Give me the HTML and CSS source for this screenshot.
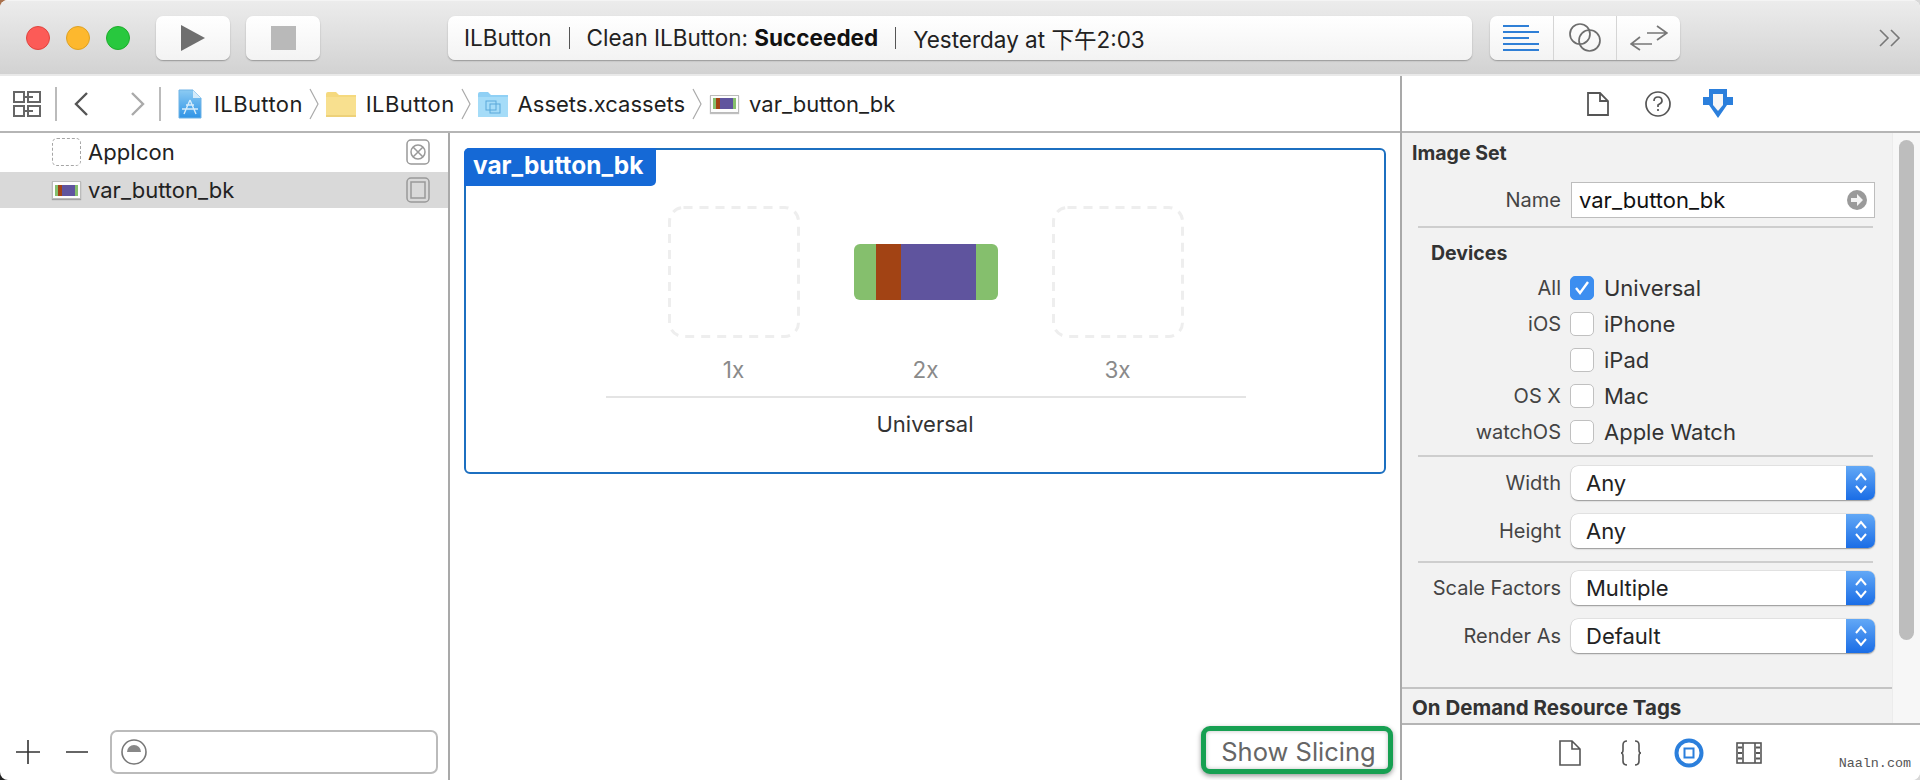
FILE: index.html
```html
<!DOCTYPE html>
<html lang="en">
<head>
<meta charset="utf-8">
<title>ILButton</title>
<link rel="stylesheet" href="styles.css">
</head>
<body>
<div class="window">
  <header class="toolbar">
    <div class="lights">
      <span class="light red"></span><span class="light yellow"></span><span class="light green"></span>
    </div>
    <button class="tool-btn play-btn"><svg width="24" height="26" viewBox="0 0 24 26"><path d="M0 0L24 13L0 26Z" fill="#6f6f6f"/></svg></button>
    <button class="tool-btn stop-btn"><span class="stop-square"></span></button>
    <div class="status">
      <span>ILButton</span><span class="status-sep"></span>
      <span>Clean ILButton: <b>Succeeded</b></span><span class="status-sep"></span>
      <span>Yesterday at 下午2:03</span>
    </div>
    <div class="segmented">
      <span class="seg"><svg width="36" height="26" viewBox="0 0 36 26" fill="none" stroke="#2f7fd6" stroke-width="2"><path d="M0 1H26M0 7H36M0 13H26M0 19H36M0 25H36"/></svg></span>
      <span class="seg seg-venn"><svg width="32" height="30" viewBox="0 0 32 30" fill="none" stroke="#6d6d6d" stroke-width="1.7"><circle cx="11" cy="11" r="10"/><circle cx="20.5" cy="17.5" r="10.5"/></svg></span>
      <span class="seg"><svg width="38" height="26" viewBox="0 0 38 26" fill="none" stroke="#777" stroke-width="1.7"><path d="M17 8H37M27 1L37 8L27 15M22 19H1M10 12L1 19L10 25"/></svg></span>
    </div>
    <svg class="more" width="22" height="18" viewBox="0 0 22 18" fill="none" stroke="#777" stroke-width="1.6"><path d="M1 1L9 9L1 17M12 1L20 9L12 17"/></svg>
  </header>
  <div class="workspace">
    <div class="editor">
      <nav class="jumpbar">
        <svg class="jb-grid" width="28" height="26" viewBox="0 0 28 26" fill="none" stroke="#666" stroke-width="2"><rect x="1" y="1" width="10" height="10"/><rect x="15" y="1" width="12" height="10"/><rect x="1" y="15" width="10" height="10"/><rect x="15" y="15" width="12" height="10"/><path d="M11 6H20M11 20H20"/></svg>
        <span class="jb-sep"></span>
        <svg class="jb-back" width="16" height="24" viewBox="0 0 16 24" fill="none" stroke="#555" stroke-width="2.4"><path d="M14 1L3 12L14 23"/></svg>
        <svg class="jb-fwd" width="16" height="24" viewBox="0 0 16 24" fill="none" stroke="#aaa" stroke-width="2.4"><path d="M2 1L13 12L2 23"/></svg>
        <span class="jb-sep"></span>
        <svg class="crumb-icon first" width="24" height="30" viewBox="0 0 24 30"><defs><linearGradient id="appdoc" x1="0" y1="0" x2="0" y2="1"><stop offset="0" stop-color="#8ccbf3"/><stop offset="1" stop-color="#2e93e6"/></linearGradient></defs><path d="M1 1H15L23 9V29H1Z" fill="url(#appdoc)" stroke="#6fb3e6"/><path d="M15 1V9H23Z" fill="#d4ebfa"/><path d="M12 11L6 25M12 11L18 25M4 20H20M8 16H16" stroke="#d6ecfb" stroke-width="1.4" fill="none"/></svg>
        <span class="crumb crumb-wide crumb-first">ILButton</span>
        <svg class="crumb-chev" width="10" height="32" viewBox="0 0 10 32" fill="none" stroke="#aaa" stroke-width="1.2"><path d="M1 1L9 16L1 31"/></svg>
        <svg class="crumb-icon" width="30" height="26" viewBox="0 0 30 26"><path d="M0 3Q0 1 2 1H10L13 4H30V25H0Z" fill="#f5d97e"/><path d="M0 6H30V26H0Z" fill="#f8e08f"/><path d="M0 25H30" stroke="#e3c263"/></svg>
        <span class="crumb crumb-wide">ILButton</span>
        <svg class="crumb-chev" width="10" height="32" viewBox="0 0 10 32" fill="none" stroke="#aaa" stroke-width="1.2"><path d="M1 1L9 16L1 31"/></svg>
        <svg class="crumb-icon" width="30" height="26" viewBox="0 0 30 26"><path d="M0 3Q0 1 2 1H10L13 4H30V25H0Z" fill="#8fd0f5"/><path d="M0 6H30V26H0Z" fill="#a5dcf8"/><rect x="8" y="10" width="10" height="9" fill="none" stroke="#5aa8da"/><rect x="12" y="13" width="10" height="9" fill="none" stroke="#5aa8da"/></svg>
        <span class="crumb">Assets.xcassets</span>
        <svg class="crumb-chev" width="10" height="32" viewBox="0 0 10 32" fill="none" stroke="#aaa" stroke-width="1.2"><path d="M1 1L9 16L1 31"/></svg>
        <span class="thumb jb-thumb"><span class="thumb-inner"></span></span>
        <span class="crumb">var_button_bk</span>
      </nav>
      <div class="editor-body">
        <aside class="sidebar">
          <ul class="asset-list">
            <li class="asset">
              <span class="dash-icon"></span><span class="asset-name">AppIcon</span>
              <svg class="asset-badge" width="24" height="26" viewBox="0 0 24 26" fill="none" stroke="#999" stroke-width="1.5"><rect x="1" y="1" width="22" height="24" rx="4"/><circle cx="12" cy="13" r="7"/><path d="M7 8L17 18M17 8L7 18"/></svg>
            </li>
            <li class="asset selected">
              <span class="thumb"><span class="thumb-inner"></span></span><span class="asset-name">var_button_bk</span>
              <svg class="asset-badge" width="24" height="26" viewBox="0 0 24 26" fill="none" stroke="#999" stroke-width="1.5"><rect x="1" y="1" width="22" height="24" rx="4"/><rect x="5" y="5" width="14" height="16"/></svg>
            </li>
          </ul>
          <div class="filter-bar">
            <svg class="ctl-plus" width="24" height="24" viewBox="0 0 24 24" stroke="#333" stroke-width="1.6"><path d="M0 12H24M12 0V24"/></svg>
            <svg class="ctl-minus" width="22" height="4" viewBox="0 0 22 4" stroke="#555" stroke-width="1.8"><path d="M0 2H22"/></svg>
            <div class="filter-field">
              <svg width="26" height="26" viewBox="0 0 26 26"><circle cx="13" cy="13" r="12" fill="none" stroke="#777" stroke-width="1.6"/><path d="M6 13A7 7 0 0 1 20 13Z" fill="#888"/></svg>
            </div>
          </div>
        </aside>
        <main class="canvas">
          <section class="set-card">
            <h2 class="set-tag">var_button_bk</h2>
            <div class="slots">
              <div class="slot"><svg class="well" viewBox="0 0 132 132" fill="none" stroke="#eeeeee" stroke-width="3"><rect x="1.5" y="1.5" width="129" height="129" rx="14" stroke-dasharray="9 7"/></svg><span class="slot-label">1x</span></div>
              <div class="slot"><div class="well"><div class="slice-image"><i class="s-green"></i><i class="s-brown"></i><i class="s-purple"></i><i class="s-green"></i></div></div><span class="slot-label">2x</span></div>
              <div class="slot"><svg class="well" viewBox="0 0 132 132" fill="none" stroke="#eeeeee" stroke-width="3"><rect x="1.5" y="1.5" width="129" height="129" rx="14" stroke-dasharray="9 7"/></svg><span class="slot-label">3x</span></div>
            </div>
            <div class="group-line"></div>
            <p class="group-name">Universal</p>
          </section>
          <button class="slicing-btn">Show Slicing</button>
        </main>
      </div>
    </div>
    <aside class="inspector">
      <div class="insp-tabs">
        <svg class="tab-doc" width="22" height="24" viewBox="0 0 22 24" fill="none" stroke="#555" stroke-width="1.8"><path d="M1 1H13L21 9V23H1ZM13 1V9H21"/></svg>
        <svg class="tab-help" width="26" height="26" viewBox="0 0 26 26" fill="none" stroke="#555" stroke-width="1.7"><circle cx="13" cy="13" r="12"/><path d="M9 10Q9 6 13 6Q17 6 17 10Q17 12 13 14V16M13 18V20"/></svg>
        <svg width="30" height="29" viewBox="0 0 30 29"><path d="M6 0H24V8H30V16H24L15 29L6 16H0V8H6Z" fill="#2b7fdc"/><path d="M10 5H20V16L15 22L10 16Z" fill="#f6f6f6"/></svg>
      </div>
      <div class="insp-body">
        <div class="insp-scroll">
          <div class="insp-content">
            <h3 class="insp-title">Image Set</h3>
            <div class="row name-row">
              <label class="lbl">Name</label>
              <div class="name-field"><span>var_button_bk</span>
                <svg width="20" height="20" viewBox="0 0 20 20"><circle cx="10" cy="10" r="10" fill="#9a9a9a"/><path d="M4 8H10V4L16 10L10 16V12H4Z" fill="#f4f4f4"/></svg>
              </div>
            </div>
            <hr class="rule rule-a">
            <h3 class="insp-sub">Devices</h3>
            <div class="row check-row"><label class="lbl">All</label><span class="cb on"><svg width="16" height="14" viewBox="0 0 16 14" fill="none" stroke="#fff" stroke-width="2.4"><path d="M2 7L6 12L14 1"/></svg></span><span class="cb-text">Universal</span></div>
            <div class="row check-row"><label class="lbl">iOS</label><span class="cb"></span><span class="cb-text">iPhone</span></div>
            <div class="row check-row"><label class="lbl"></label><span class="cb"></span><span class="cb-text">iPad</span></div>
            <div class="row check-row"><label class="lbl">OS X</label><span class="cb"></span><span class="cb-text">Mac</span></div>
            <div class="row check-row"><label class="lbl">watchOS</label><span class="cb"></span><span class="cb-text">Apple Watch</span></div>
            <hr class="rule rule-b">
            <div class="row sel-row"><label class="lbl">Width</label><div class="select"><span>Any</span><span class="sel-arrows"><svg width="14" height="22" viewBox="0 0 14 22" fill="none" stroke="#fff" stroke-width="2"><path d="M2 8L7 2L12 8M2 14L7 20L12 14"/></svg></span></div></div>
            <div class="row sel-row"><label class="lbl">Height</label><div class="select"><span>Any</span><span class="sel-arrows"><svg width="14" height="22" viewBox="0 0 14 22" fill="none" stroke="#fff" stroke-width="2"><path d="M2 8L7 2L12 8M2 14L7 20L12 14"/></svg></span></div></div>
            <hr class="rule rule-c">
            <div class="row sel-row"><label class="lbl">Scale Factors</label><div class="select"><span>Multiple</span><span class="sel-arrows"><svg width="14" height="22" viewBox="0 0 14 22" fill="none" stroke="#fff" stroke-width="2"><path d="M2 8L7 2L12 8M2 14L7 20L12 14"/></svg></span></div></div>
            <div class="row sel-row"><label class="lbl">Render As</label><div class="select"><span>Default</span><span class="sel-arrows"><svg width="14" height="22" viewBox="0 0 14 22" fill="none" stroke="#fff" stroke-width="2"><path d="M2 8L7 2L12 8M2 14L7 20L12 14"/></svg></span></div></div>
          </div>
          <h3 class="insp-title tags">On Demand Resource Tags</h3>
        </div>
        <div class="scroll-track"><div class="scroll-thumb"></div></div>
      </div>
      <div class="library">
        <svg width="22" height="26" viewBox="0 0 22 26" fill="none" stroke="#555" stroke-width="1.6"><path d="M1 1H13L21 9V25H1ZM13 1V9H21"/></svg>
        <svg width="22" height="26" viewBox="0 0 22 26" fill="none" stroke="#555" stroke-width="1.6"><path d="M7 1Q3 1 3 5V10Q3 13 1 13Q3 13 3 16V21Q3 25 7 25M15 1Q19 1 19 5V10Q19 13 21 13Q19 13 19 16V21Q19 25 15 25"/></svg>
        <svg width="30" height="30" viewBox="0 0 30 30" fill="none" stroke="#2b7fdc"><circle cx="15" cy="15" r="12.5" stroke-width="4"/><rect x="10.5" y="10.5" width="9" height="9" stroke-width="2"/></svg>
        <svg width="26" height="22" viewBox="0 0 26 22" fill="none" stroke="#555" stroke-width="1.6"><rect x="1" y="1" width="24" height="20"/><path d="M7 1V21M19 1V21"/><path d="M2 5.5H6M2 11H6M2 16.500H6M20 5.500H24M20 11H24M20 16.500H24" stroke-width="1.8"/></svg>
        <span class="watermark">Naaln.com</span>
      </div>
    </aside>
  </div>
</div>
</body>
</html>
```
FILE: styles.css
```css
* { box-sizing: border-box; }
html, body { margin: 0; padding: 0; height: 100%; overflow: hidden; }
body { font-family: Inter, "Noto Sans CJK SC", "Liberation Sans", sans-serif; color: #222; font-size: 22px; background: linear-gradient(90deg, transparent 50%, #d8d8d8 50%), linear-gradient(#a9714d 50%, #222 50%); }
h2, h3, p, ul { margin: 0; padding: 0; }
hr { border: 0; margin: 0; }
.window { width: 1920px; height: 780px; display: flex; flex-direction: column; background: #fff; border-radius: 8px; overflow: hidden; }

/* toolbar */
.toolbar { height: 76px; flex: none; display: flex; align-items: center; padding: 0 0 0 26px; background: linear-gradient(#ececec, #d2d2d2); border-bottom: 2px solid #e9e9e9; border-top: 1px solid #f4f4f4; }
.lights { display: flex; gap: 16px; margin-right: 26px; }
.light { width: 24px; height: 24px; border-radius: 50%; }
.red { background: #fc5b57; border: 1px solid #e0443e; }
.yellow { background: #fdb82e; border: 1px solid #dea123; }
.green { background: #28c83e; border: 1px solid #1dad2b; }
.tool-btn { width: 74px; height: 44px; padding: 0; border: 0; border-radius: 7px; background: linear-gradient(#fff, #f3f3f3); box-shadow: 0 1px 1.5px rgba(0,0,0,.3); display: flex; align-items: center; justify-content: center; }
.play-btn { margin-right: 16px; }
.stop-square { display: block; width: 25px; height: 24px; background: #b9b9b9; }
.status { width: 1024px; height: 44px; margin-left: 128px; margin-right: 18px; padding-left: 16px; border-radius: 7px; background: linear-gradient(#fff, #f3f3f3); box-shadow: 0 1px 1.5px rgba(0,0,0,.3); display: flex; align-items: center; gap: 17px; color: #222; font-size: 22.5px; }
.status b { font-weight: 700; color: #111; }
.status-sep { width: 1px; height: 22px; background: #555; }
.segmented { width: 190px; height: 44px; border-radius: 7px; background: linear-gradient(#fff, #f3f3f3); box-shadow: 0 1px 1.5px rgba(0,0,0,.3); display: flex; }
.seg { flex: 1; display: flex; align-items: center; justify-content: center; border-left: 1px solid #d5d5d5; }
.seg:first-child { border-left: 0; }
.more { margin-left: 199px; }

/* workspace */
.workspace { flex: 1; min-height: 0; display: flex; }
.editor { width: 1400px; flex: none; display: flex; flex-direction: column; }
.jumpbar { height: 57px; flex: none; display: flex; align-items: center; padding-left: 13px; border-bottom: 2px solid #b5b5b5; background: #fff; }
.jb-grid { margin-right: 14px; }
.jb-sep { width: 2px; height: 34px; background: #bbb; }
.jb-back { margin-left: 16px; }
.jb-fwd { margin-left: 41px; margin-right: 13px; }
.crumb-icon.first { margin-left: 17px; }
.crumb { margin-left: 10px; font-size: 22px; color: #1f1f1f; white-space: nowrap; }
.crumb-first { margin-left: 12px; }
.crumb-wide { letter-spacing: .4px; }
.crumb-chev { margin: 0 6.5px; }
.thumb { width: 29px; height: 18px; flex: none; background: #fdfdfd; border: 1px solid #bbb; box-shadow: 0 1px 1px rgba(0,0,0,.25); display: flex; align-items: center; justify-content: center; }
.thumb-inner { display: block; width: 23px; height: 11px; background: linear-gradient(90deg, #85bf6d 0 15%, #a24314 15% 32%, #5f549e 32% 85%, #85bf6d 85%); }
.jb-thumb { margin-left: 2px; }

.editor-body { flex: 1; min-height: 0; display: flex; }
.sidebar { width: 450px; flex: none; border-right: 2px solid #a9a9a9; display: flex; flex-direction: column; justify-content: space-between; }
.asset-list { list-style: none; }
.asset { height: 36px; display: flex; align-items: center; padding-left: 52px; padding-right: 18px; }
.asset:first-child { height: 39px; padding-bottom: 2px; }
.asset.selected { background: #d9d9d9; }
.asset-name { margin-left: 7px; flex: 1; font-size: 22px; }
.dash-icon { width: 29px; height: 28px; border: 1.5px dashed #a5a5a5; border-radius: 5px; flex: none; }
.filter-bar { height: 50px; margin-bottom: 3px; display: flex; align-items: center; padding-left: 16px; }
.ctl-minus { margin-left: 26px; }
.filter-field { width: 328px; height: 44px; margin-left: 22px; border: 2px solid #bbb; border-radius: 7px; padding-left: 9px; display: flex; align-items: center; background: #fff; }

.canvas { flex: 1; min-width: 0; padding: 15px 13px 6px 14px; display: flex; flex-direction: column; justify-content: space-between; align-items: flex-start; background: #fff; }
.set-card { width: 922px; height: 326px; border: 2px solid #1c6fc0; border-radius: 6px; display: flex; flex-direction: column; align-items: center; }
.set-tag { align-self: flex-start; margin: -2px 0 0 -2px; height: 38px; padding: 0 13px 0 9px; background: #1569d6; border-radius: 5px 0 5px 0; color: #fff; font-size: 24.4px; font-weight: 700; line-height: 35px; }
.slots { display: flex; margin-top: 20px; margin-left: 1px; }
.slot { width: 192px; display: flex; flex-direction: column; align-items: center; }
.well { width: 132px; height: 132px; display: flex; align-items: center; justify-content: center; }
.slot-label { margin-top: 19px; color: #8a8a8a; line-height: 26px; font-size: 22.5px; }
.slice-image { width: 144px; height: 56px; flex: none; display: flex; border-radius: 6px; overflow: hidden; }
.slice-image i { display: block; }
.s-green { width: 22px; background: #85bf6d; }
.s-brown { width: 25px; background: #a24314; }
.s-purple { width: 75px; background: #5f549e; }
.group-line { width: 640px; height: 2px; margin: 13px 0 0 1px; background: #e4e4e4; }
.group-name { margin-top: 13px; line-height: 26px; color: #333; }
.slicing-btn { align-self: flex-end; width: 192px; height: 48px; margin-right: -6px; padding: 3px 0 0 3px; border: 5px solid #17a052; border-radius: 9px; background: #fff; box-shadow: 0 2px 5px rgba(0,0,0,.4), inset 0 0 4px rgba(0,0,0,.25); font: inherit; font-size: 25.5px; color: #666; }

/* inspector */
.inspector { width: 520px; flex: none; border-left: 2px solid #a9a9a9; display: flex; flex-direction: column; }
.insp-tabs { height: 57px; flex: none; display: flex; align-items: center; justify-content: center; gap: 32px; padding-right: 2px; background: #fff; border-bottom: 2px solid #b5b5b5; }
.tab-doc { margin-right: 4px; }
.insp-body { flex: 1; min-height: 0; display: flex; background: #f2f2f2; }
.insp-scroll { width: 490px; flex: none; display: flex; flex-direction: column; overflow: hidden; }
.insp-content { height: 556px; flex: none; padding: 8px 0 0 10px; border-bottom: 2px solid #c4c4c4; }
.insp-title { font-size: 19.5px; font-weight: 700; color: #333; line-height: 24px; }
.insp-title.tags { margin: 7px 0 0 10px; font-size: 20.5px; }
.row { display: flex; align-items: center; }
.lbl { width: 149px; flex: none; text-align: right; color: #444; font-size: 20px; }
.name-row { margin-top: 17px; height: 36px; }
.name-field { width: 304px; height: 36px; margin-left: 10px; padding: 0 7px; background: #fff; border: 1px solid #bdbdbd; display: flex; align-items: center; justify-content: space-between; color: #111; }
.rule { height: 2px; background: #cecece; width: 455px; margin-left: 6px; }
.rule-a { margin-top: 8px; }
.insp-sub { font-size: 19.5px; font-weight: 700; color: #333; line-height: 24px; margin: 12.5px 0 0 19px; }
.check-row { height: 36px; }
.insp-sub + .check-row { margin-top: 5px; }
.cb { width: 24px; height: 24px; margin-left: 9px; border-radius: 5px; background: #fff; border: 1px solid #c0c0c0; display: flex; align-items: center; justify-content: center; flex: none; }
.cb.on { background: #3c8ef0; border-color: #3c8ef0; }
.cb-text { margin-left: 10px; color: #333; }
.rule-b { margin-top: 5px; margin-bottom: 9px; }
.sel-row { height: 34px; margin-bottom: 14px; }
.select { width: 304px; height: 34px; margin-left: 10px; padding-left: 15px; background: #fff; border-radius: 7px; box-shadow: 0 1px 1.5px rgba(0,0,0,.35), 0 0 0 .5px rgba(0,0,0,.12); display: flex; align-items: center; justify-content: space-between; overflow: hidden; color: #222; }
.sel-arrows { width: 29px; height: 34px; background: linear-gradient(#62a8f6, #1a6de6); display: flex; align-items: center; justify-content: center; }
.rule-c { margin-top: -1px; margin-bottom: 8px; }
.scroll-track { flex: 1; padding: 7px 6px 0 6px; background: #f7f7f7; border-left: 1px solid #ececec; }
.scroll-thumb { height: 500px; border-radius: 8px; background: #bdbdbd; }
.library { height: 57px; flex: none; background: #fff; border-top: 2px solid #b5b5b5; display: flex; align-items: center; padding-left: 157px; position: relative; }
.library svg:nth-child(1) { margin-right: 39px; }
.library svg:nth-child(2) { margin-right: 32px; }
.library svg:nth-child(3) { margin-right: 32px; }
.watermark { position: absolute; right: 9px; bottom: 9px; font-family: "Liberation Mono", monospace; font-size: 13.4px; color: #555; }
```
